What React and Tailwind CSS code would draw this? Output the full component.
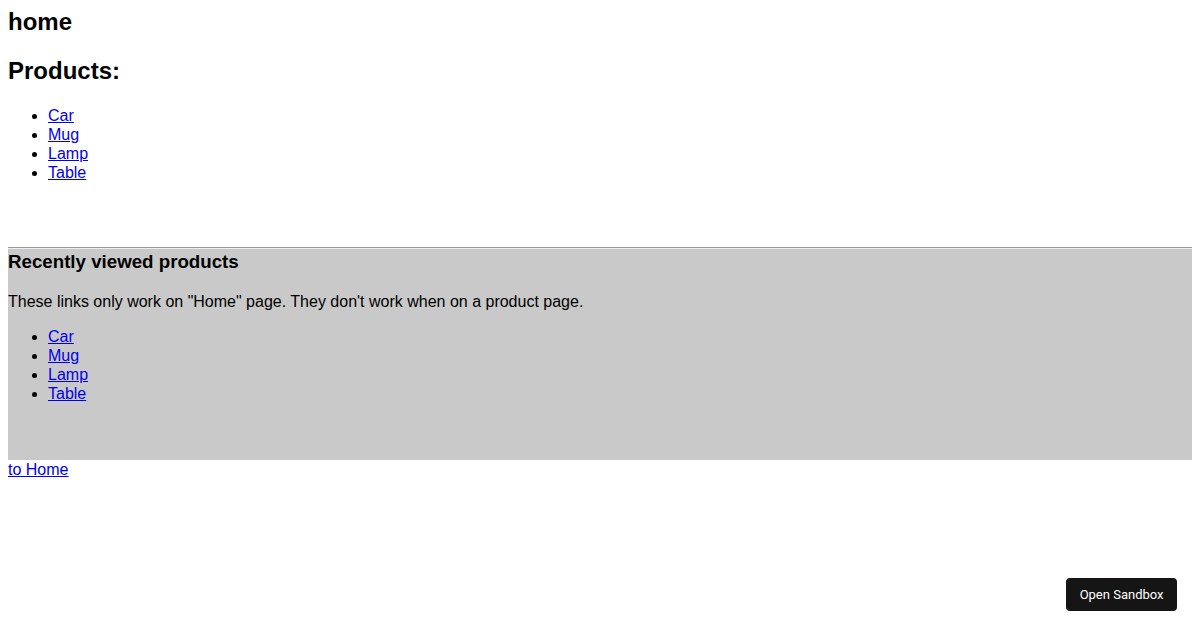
const products = ["Car", "Mug", "Lamp", "Table"];

function ProductList() {
  return (
    <ul className="list-disc pl-10 my-4">
      {products.map((name) => (
        <li key={name} className="leading-[19px]">
          <a href="#" className="text-[#0000ee] underline">
            {name}
          </a>
        </li>
      ))}
    </ul>
  );
}

export default function App() {
  return (
    <div className="relative min-h-[630px] bg-white p-2 text-base leading-[19px] text-black font-['Liberation_Sans',Arial,sans-serif]">
      <h2 className="text-2xl font-bold leading-[28px] mt-0 mb-[21px]">home</h2>
      <h2 className="text-2xl font-bold leading-[28px] mb-[21px]">Products:</h2>
      <ProductList />

      {/* recently viewed */}
      <div className="mt-[65px] h-[213px] bg-[#c9c9c9]">
        <hr className="border-0 border-t border-t-[#9a9a9a] border-b border-b-[#eeeeee] m-0" />
        <h3 className="text-[18.72px] font-bold leading-[22px] mt-0.5">Recently viewed products</h3>
        <p className="mt-[19px] mb-4">
          These links only work on "Home" page. They don't work when on a product page.
        </p>
        <ProductList />
      </div>
      <a href="#" className="text-[#0000ee] underline">
        to Home
      </a>

      <button className="fixed right-[23px] bottom-[19px] h-[33px] px-[13.5px] rounded bg-[#151515] text-white text-[13px] leading-normal font-['Roboto','Liberation_Sans',sans-serif]">
        Open Sandbox
      </button>
    </div>
  );
}
